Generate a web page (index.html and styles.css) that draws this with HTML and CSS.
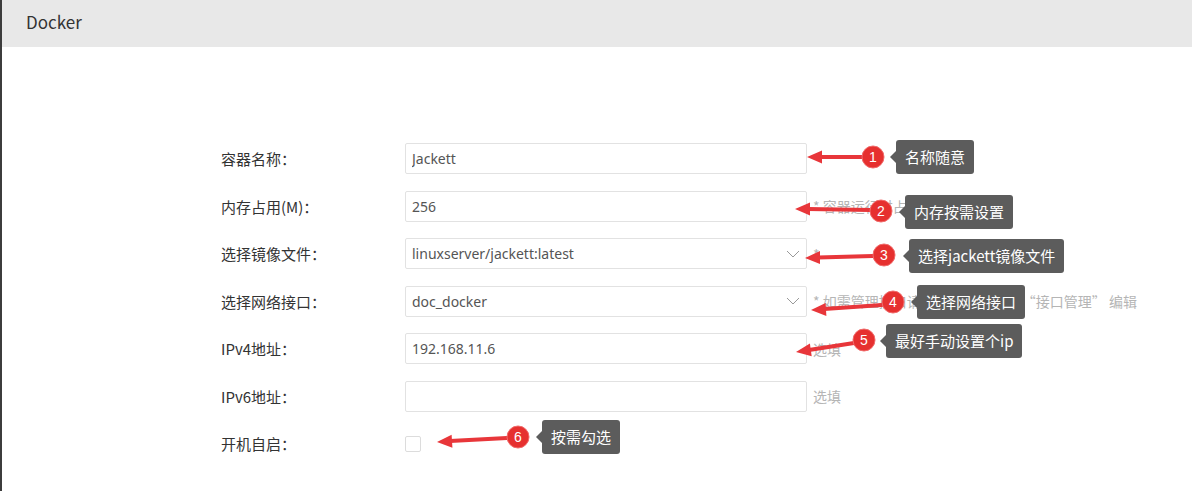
FILE: index.html
```html
<!DOCTYPE html>
<html lang="zh-CN">
<head>
    <meta charset="UTF-8">
    <meta name="viewport" content="width=device-width, initial-scale=1.0">
    <title>Docker</title>
    <link rel="stylesheet" href="styles.css">
</head>
<body>

<div class="page">
    <div class="header">Docker</div>

    <div class="form">
        <div class="row">
            <label class="label">容器名称：</label>
            <div class="field"><input class="input" type="text" value="Jackett"></div>
        </div>
        <div class="row">
            <label class="label">内存占用(M)：</label>
            <div class="field"><input class="input" type="text" value="256"></div>
            <span class="help">* 容器运行时占用内存最大值</span>
        </div>
        <div class="row">
            <label class="label">选择镜像文件：</label>
            <div class="field select">
                <span class="select-text">linuxserver/jackett:latest</span>
                <svg class="chevron" width="14" height="8" viewBox="0 0 14 8"><path d="M1 1 L7 7 L13 1" fill="none" stroke="#999" stroke-width="1"/></svg>
            </div>
            <span class="help">*</span>
        </div>
        <div class="row">
            <label class="label">选择网络接口：</label>
            <div class="field select">
                <span class="select-text">doc_docker</span>
                <svg class="chevron" width="14" height="8" viewBox="0 0 14 8"><path d="M1 1 L7 7 L13 1" fill="none" stroke="#999" stroke-width="1"/></svg>
            </div>
            <span class="help">* 如需管理接口请到网络设置列表 “接口管理” 编辑</span>
        </div>
        <div class="row">
            <label class="label">IPv4地址：</label>
            <div class="field"><input class="input" type="text" value="192.168.11.6"></div>
            <span class="help">选填</span>
        </div>
        <div class="row">
            <label class="label">IPv6地址：</label>
            <div class="field"><input class="input" type="text" value=""></div>
            <span class="help">选填</span>
        </div>
        <div class="row">
            <label class="label">开机自启：</label>
            <span class="checkbox"></span>
        </div>
    </div>

    <!-- annotations drawn on top of the screenshot -->
    <svg class="marks" width="1192" height="491" viewBox="0 0 1192 491">
        <g stroke="#e8363a" stroke-width="4" stroke-linecap="round">
            <line x1="862" y1="157" x2="820" y2="157"/>
            <line x1="870" y1="210" x2="808" y2="209"/>
            <line x1="873" y1="256" x2="818" y2="257.6"/>
            <line x1="882" y1="305" x2="824" y2="309"/>
            <line x1="854" y1="343" x2="809" y2="350"/>
            <line x1="507" y1="438" x2="450" y2="441"/>
        </g>
        <g fill="#e8363a">
            <polygon points="807,157 822,150.5 822,163.5"/>
            <polygon points="795,209 810,202.5 810,215.5"/>
            <polygon points="805,258 820,251 820,264"/>
            <polygon points="811,310 825.6,303 826.4,316"/>
            <polygon points="796,352 809.9,343.4 811.7,356.2"/>
            <polygon points="437,442 451.6,434.7 452.4,447.7"/>
        </g>
        <g fill="#e6302f" stroke="#f16b6b" stroke-width="1">
            <circle cx="873" cy="157" r="11"/>
            <circle cx="881" cy="211" r="11"/>
            <circle cx="884" cy="255" r="11"/>
            <circle cx="893" cy="302" r="11"/>
            <circle cx="864" cy="340" r="11"/>
            <circle cx="518" cy="437" r="11"/>
        </g>
        <g fill="#ffffff" font-family="'Liberation Sans', Arial, sans-serif" font-size="14" text-anchor="middle">
            <text x="873" y="162">1</text>
            <text x="881" y="216">2</text>
            <text x="884" y="260">3</text>
            <text x="893" y="307">4</text>
            <text x="864" y="345">5</text>
            <text x="518" y="442">6</text>
        </g>
    </svg>

    <div class="tip tip-1">名称随意</div>
    <div class="tip tip-2">内存按需设置</div>
    <div class="tip tip-3">选择jackett镜像文件</div>
    <div class="tip tip-4">选择网络接口</div>
    <div class="tip tip-5">最好手动设置个ip</div>
    <div class="tip tip-6">按需勾选</div>
</div>

</body>
</html>
```

FILE: styles.css
```css
body {
    margin: 0;
    background-color: #ffffff;
    font-family: "Noto Sans CJK SC", "Noto Sans", sans-serif;
    color: #333333;
}
.page {
    position: relative;
    width: 1190px;
    height: 491px;
    border-left: 2px solid #3c3c3c;
    overflow: hidden;
}
.header {
    height: 47px;
    line-height: 44px;
    background-color: #e8e8e8;
    padding-left: 24px;
    font-size: 17px;
    color: #333333;
}
.form {
    padding-top: 96px;
    padding-left: 219px;
}
.row {
    display: flex;
    align-items: center;
    height: 31px;
    margin-bottom: 16.5px;
}
.label {
    width: 184px;
    font-size: 15px;
    color: #333333;
}
.field {
    width: 402px;
    height: 31px;
    box-sizing: border-box;
    border: 1px solid #e2e2e2;
    border-radius: 2px;
    background-color: #ffffff;
}
.input {
    width: 100%;
    height: 100%;
    box-sizing: border-box;
    border: none;
    outline: none;
    padding: 0 6px;
    font-family: "Noto Sans", "Noto Sans CJK SC", sans-serif;
    font-size: 14px;
    color: #555555;
    background: transparent;
}
.select {
    display: flex;
    align-items: center;
    justify-content: space-between;
    padding: 0 6px 0 6px;
}
.select-text {
    font-family: "Noto Sans", "Noto Sans CJK SC", sans-serif;
    font-size: 14px;
    color: #555555;
}
.chevron {
    display: block;
}
.help {
    margin-left: 6px;
    font-size: 14px;
    color: #b5b5b5;
    white-space: nowrap;
}
.checkbox {
    width: 16px;
    height: 16px;
    box-sizing: border-box;
    border: 1px solid #dcdcdc;
    border-radius: 2px;
}
.marks {
    position: absolute;
    left: -2px;
    top: 0;
}
.tip {
    position: absolute;
    height: 34px;
    line-height: 34px;
    padding: 0 9px;
    background-color: #5c5c5c;
    color: #ffffff;
    font-size: 15px;
    border-radius: 3px;
    white-space: nowrap;
}
.tip::before {
    content: "";
    position: absolute;
    left: -6px;
    top: 11px;
    border-top: 6px solid transparent;
    border-bottom: 6px solid transparent;
    border-right: 6px solid #5c5c5c;
}
.tip-1 { left: 894px; top: 140px; }
.tip-2 { left: 903px; top: 195px; }
.tip-3 { left: 907px; top: 239px; }
.tip-4 { left: 915px; top: 285px; }
.tip-5 { left: 884px; top: 324px; }
.tip-6 { left: 540px; top: 420px; }
```
